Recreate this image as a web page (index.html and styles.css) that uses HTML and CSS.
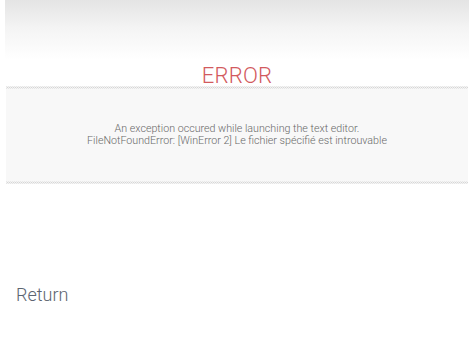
FILE: index.html
```
<!DOCTYPE html>
<html>
<head>
<meta charset="utf-8">
<link rel="stylesheet" href="styles.css">
</head>
<body>
<div class="page">
  <header class="header">
    <h1 class="title">ERROR</h1>
  </header>
  <section class="panel">
    <p class="msg">An exception occured while launching the text editor.<br>FileNotFoundError: [WinError 2] Le fichier spécifié est introuvable</p>
  </section>
  <div class="footer">
    <span class="return">Return</span>
  </div>
</div>
</body>
</html>
```
FILE: styles.css
```
html, body {
  margin: 0;
  padding: 0;
  background: #fff;
}
.page {
  width: 474px;
  height: 351px;
  display: flex;
  flex-direction: column;
  font-family: Roboto, "Liberation Sans", sans-serif;
  font-weight: 300;
}
.header {
  height: 86px;
  margin: 0 5px;
  background: linear-gradient(to bottom, #e4e4e4 0px, #f4f4f4 28px, #ffffff 60px, #ffffff 86px);
  display: flex;
  align-items: flex-end;
  justify-content: center;
}
.title {
  margin: 0;
  font-size: 22px;
  font-weight: 300;
  color: #d25a5e;
  line-height: 20px;
  letter-spacing: 0.2px;
}
.panel {
  margin: 0 6px;
  height: 98px;
  background-color: #f8f8f8;
  background-image:
    repeating-linear-gradient(90deg, #e8e8e8 0 1px, #f6f6f6 1px 2px),
    repeating-linear-gradient(90deg, #f2f2f2 0 1px, #d6d6d6 1px 2px),
    repeating-linear-gradient(90deg, #e6e6e6 0 1px, #f6f6f6 1px 2px),
    repeating-linear-gradient(90deg, #e8e8e8 0 1px, #f6f6f6 1px 2px),
    repeating-linear-gradient(90deg, #f2f2f2 0 1px, #d6d6d6 1px 2px),
    repeating-linear-gradient(90deg, #e6e6e6 0 1px, #f6f6f6 1px 2px);
  background-size: 100% 1px;
  background-position: 0 0, 0 1px, 0 2px, 0 95px, 0 96px, 0 97px;
  background-repeat: no-repeat;
  display: flex;
  align-items: center;
  justify-content: center;
}
.msg {
  margin: 0;
  font-size: 10.7px;
  line-height: 12.5px;
  color: #686868;
  text-align: center;
  font-weight: 300;
}
.footer {
  padding: 100px 0 0 16px;
}
.return {
  font-size: 18px;
  color: #5b6470;
  font-weight: 300;
}
```
